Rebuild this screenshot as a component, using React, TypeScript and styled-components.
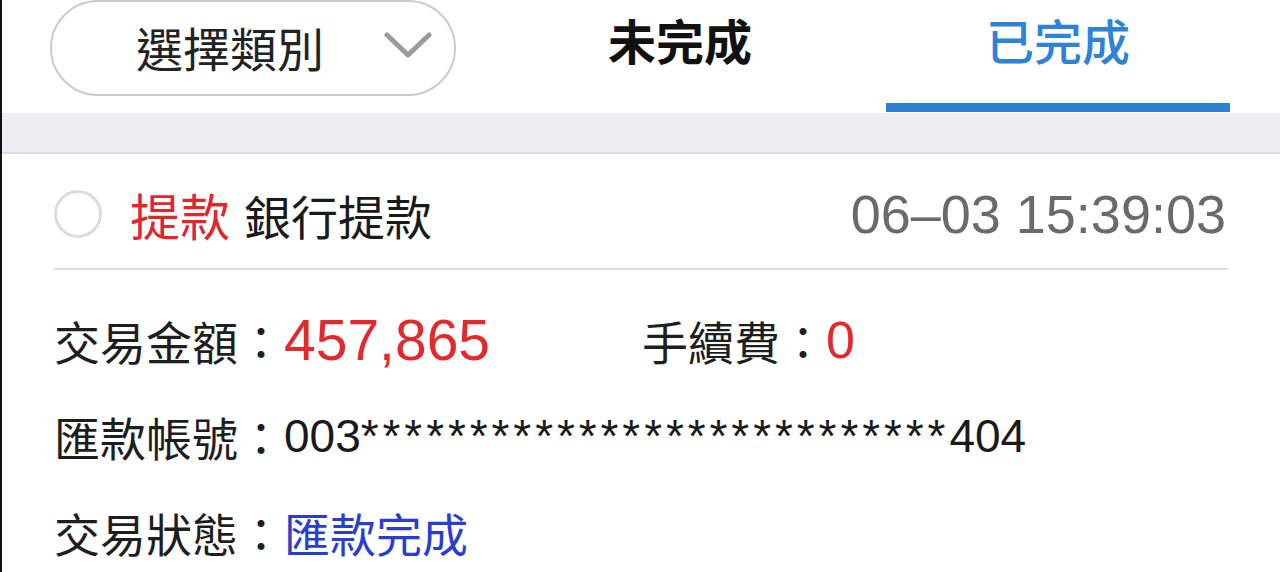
import styled, { createGlobalStyle } from "styled-components";

const GlobalStyle = createGlobalStyle`
  html, body {
    margin: 0;
    padding: 0;
    background: #fff;
  }
  body {
    font-family: "Liberation Sans", "Noto Sans CJK TC", sans-serif;
    color: #222;
  }
`;

const Page = styled.div`
  width: 1280px;
  height: 572px;
  box-sizing: border-box;
  border-left: 2px solid #111;
  overflow: hidden;
  background: #fff;
`;

const Header = styled.div`
  height: 113px;
  display: flex;
  align-items: flex-start;
  padding: 0 50px 0 48px;
  gap: 52px;
`;

const CategorySelect = styled.div`
  width: 406px;
  height: 96px;
  box-sizing: border-box;
  border: 2px solid #cacaca;
  border-radius: 48px;
  display: flex;
  align-items: center;
  padding: 0 0 4px 84px;
  gap: 60px;
  font-size: 47px;
  color: #222;
`;

const Tabs = styled.div`
  display: flex;
  gap: 34px;
`;

const Tab = styled.div<{ $active?: boolean }>`
  width: 344px;
  height: 112px;
  box-sizing: border-box;
  padding-top: 16px;
  text-align: center;
  font-size: 48px;
  line-height: 56px;
  font-weight: ${(p) => (p.$active ? 500 : 700)};
  color: ${(p) => (p.$active ? "#2f82d6" : "#111")};
  border-bottom: 9px solid ${(p) => (p.$active ? "#2f7fd3" : "transparent")};
`;

const Band = styled.div`
  height: 39px;
  background: #efeef4;
  border-bottom: 2px solid #dcdbe1;
`;

const Card = styled.div`
  padding: 0 52px;
`;

const RecordHead = styled.div`
  height: 116px;
  box-sizing: border-box;
  padding-top: 6px;
  display: flex;
  align-items: center;
  border-bottom: 2px solid #dedede;
`;

const Radio = styled.span`
  width: 48px;
  height: 48px;
  box-sizing: border-box;
  border: 3px solid #dcdcdc;
  border-radius: 50%;
  margin-right: 28px;
  flex-shrink: 0;
`;

const TypeTag = styled.span`
  font-size: 50px;
  color: #e3262a;
  margin-right: 14px;
`;

const RecordName = styled.span`
  font-size: 47px;
  color: #1a1a1a;
`;

const RecordTime = styled.span`
  margin-left: auto;
  font-size: 54px;
  color: #6a6a6a;
  padding-right: 2px;
`;

const Details = styled.div`
  padding-top: 22px;
`;

const DetailRow = styled.div`
  height: 96px;
  display: grid;
  grid-template-columns: 588px 1fr;
  align-items: center;
`;

const Field = styled.div`
  display: flex;
  align-items: center;
  white-space: nowrap;
`;

const Label = styled.span`
  font-size: 46px;
  color: #1e1e1e;
`;

const Value = styled.span<{ $tone?: "red" | "blue" | "plain"; $size?: number }>`
  font-size: ${(p) => p.$size ?? 46}px;
  color: ${(p) =>
    p.$tone === "red" ? "#e4292c" : p.$tone === "blue" ? "#2b3cd0" : "#1a1a1a"};
`;

const Mask = styled.span`
  letter-spacing: 3.9px;
`;

function Chevron() {
  return (
    <svg width="48" height="28" viewBox="0 0 48 28">
      <path
        d="M3 3 L24 23 L45 3"
        fill="none"
        stroke="#9b9b9b"
        strokeWidth="5"
        strokeLinecap="round"
        strokeLinejoin="round"
      />
    </svg>
  );
}

export default function App() {
  return (
    <Page>
      <GlobalStyle />
      <Header>
        <CategorySelect>
          <span>選擇類別</span>
          <Chevron />
        </CategorySelect>
        <Tabs>
          <Tab>未完成</Tab>
          <Tab $active>已完成</Tab>
        </Tabs>
      </Header>
      <Band />
      <Card>
        <RecordHead>
          <Radio />
          <TypeTag>提款</TypeTag>
          <RecordName>銀行提款</RecordName>
          <RecordTime>06–03 15:39:03</RecordTime>
        </RecordHead>
        <Details>
          <DetailRow>
            <Field>
              <Label>交易金額：</Label>
              <Value $tone="red" $size={57}>
                457,865
              </Value>
            </Field>
            <Field>
              <Label>手續費：</Label>
              <Value $tone="red" $size={52}>
                0
              </Value>
            </Field>
          </DetailRow>
          <DetailRow>
            <Field>
              <Label>匯款帳號：</Label>
              <Value>
                003<Mask>***************************</Mask>404
              </Value>
            </Field>
          </DetailRow>
          <DetailRow>
            <Field>
              <Label>交易狀態：</Label>
              <Value $tone="blue">匯款完成</Value>
            </Field>
          </DetailRow>
        </Details>
      </Card>
    </Page>
  );
}
